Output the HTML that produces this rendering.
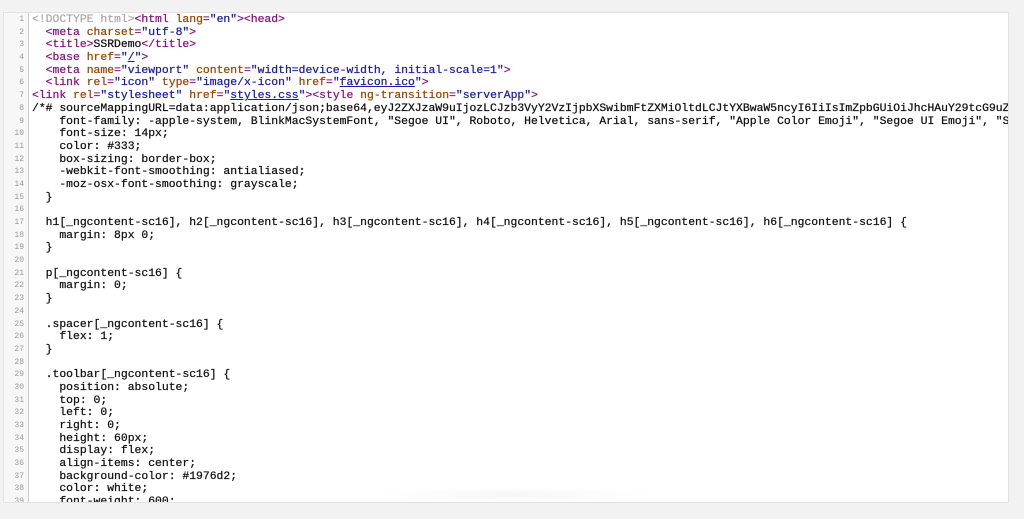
<!DOCTYPE html>
<html><head><meta charset="utf-8"><style>
body{margin:0;background:#f2f2f2;width:1024px;height:519px;overflow:hidden;position:relative}
.p{position:absolute;left:3px;top:12px;width:1004px;height:489px;background:#fff;border:1px solid #e2e2e2;overflow:hidden}
.g{position:absolute;left:0;top:0;bottom:0;width:24px;background:#f7f7f7;border-right:1px solid #ccc}
.n,.c{position:absolute;top:1px;font-family:"Liberation Mono",monospace;line-height:12.68px;white-space:pre}
.n{left:0;width:20px;text-align:right;font-size:8px;color:#999}
.c{left:28px;font-size:11.4px;color:#111;-webkit-text-stroke:0.25px}
.t{color:#881280}.a{color:#994500}.v{color:#1a1aa6}.d{color:#aaa}.u{color:#1a1aa6;text-decoration:underline}
.sh{position:absolute;left:370px;top:487px;width:290px;height:16px;background:radial-gradient(ellipse at center,rgba(0,0,0,.035),rgba(0,0,0,0) 70%)}
</style></head><body>
<div class="p"><div class="g"></div>
<div class="n">1
2
3
4
5
6
7
8
9
10
11
12
13
14
15
16
17
18
19
20
21
22
23
24
25
26
27
28
29
30
31
32
33
34
35
36
37
38
39</div>
<div class="c"><span class="d">&lt;!DOCTYPE html&gt;</span><span class="t">&lt;html </span><span class="a">lang</span><span class="t">=</span><span class="v">"en"</span><span class="t">&gt;&lt;head&gt;</span>
  <span class="t">&lt;meta </span><span class="a">charset</span><span class="t">=</span><span class="v">"utf-8"</span><span class="t">&gt;</span>
  <span class="t">&lt;title&gt;</span>SSRDemo<span class="t">&lt;/title&gt;</span>
  <span class="t">&lt;base </span><span class="a">href</span><span class="t">=</span><span class="v">"<span class="u">/</span>"</span><span class="t">&gt;</span>
  <span class="t">&lt;meta </span><span class="a">name</span><span class="t">=</span><span class="v">"viewport"</span> <span class="a">content</span><span class="t">=</span><span class="v">"width=device-width, initial-scale=1"</span><span class="t">&gt;</span>
  <span class="t">&lt;link </span><span class="a">rel</span><span class="t">=</span><span class="v">"icon"</span> <span class="a">type</span><span class="t">=</span><span class="v">"image/x-icon"</span> <span class="a">href</span><span class="t">=</span><span class="v">"<span class="u">favicon.ico</span>"</span><span class="t">&gt;</span>
<span class="t">&lt;link </span><span class="a">rel</span><span class="t">=</span><span class="v">"stylesheet"</span> <span class="a">href</span><span class="t">=</span><span class="v">"<span class="u">styles.css</span>"</span><span class="t">&gt;&lt;style </span><span class="a">ng-transition</span><span class="t">=</span><span class="v">"serverApp"</span><span class="t">&gt;</span>
/*# sourceMappingURL=data:application/json;base64,eyJ2ZXJzaW9uIjozLCJzb3VyY2VzIjpbXSwibmFtZXMiOltdLCJtYXBwaW5ncyI6IiIsImZpbGUiOiJhcHAuY29tcG9uZ
    font-family: -apple-system, BlinkMacSystemFont, "Segoe UI", Roboto, Helvetica, Arial, sans-serif, "Apple Color Emoji", "Segoe UI Emoji", "S
    font-size: 14px;
    color: #333;
    box-sizing: border-box;
    -webkit-font-smoothing: antialiased;
    -moz-osx-font-smoothing: grayscale;
  }

  h1[_ngcontent-sc16], h2[_ngcontent-sc16], h3[_ngcontent-sc16], h4[_ngcontent-sc16], h5[_ngcontent-sc16], h6[_ngcontent-sc16] {
    margin: 8px 0;
  }

  p[_ngcontent-sc16] {
    margin: 0;
  }

  .spacer[_ngcontent-sc16] {
    flex: 1;
  }

  .toolbar[_ngcontent-sc16] {
    position: absolute;
    top: 0;
    left: 0;
    right: 0;
    height: 60px;
    display: flex;
    align-items: center;
    background-color: #1976d2;
    color: white;
    font-weight: 600;</div>
</div>
<div class="sh"></div>
</body></html>
